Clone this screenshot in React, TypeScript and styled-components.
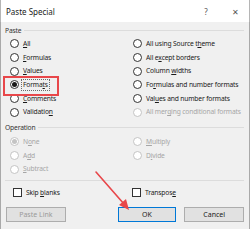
import React from "react";
import styled, { createGlobalStyle } from "styled-components";

const GlobalStyle = createGlobalStyle`
  html, body { margin: 0; padding: 0; background: #ffffff; }
  body { font-family: "Noto Sans", "Open Sans", sans-serif; }
  * { box-sizing: border-box; }
`;

const Dialog = styled.div`
  position: relative;
  width: 250px;
  height: 229px;
  display: flex;
  flex-direction: column;
  overflow: hidden;
  color: #1a1a1a;
`;

const TitleBar = styled.div`
  height: 22px;
  background: #ffffff;
  display: flex;
  align-items: center;
  padding-left: 5px;
  border-left: 1px solid #b5b5b5;
  border-right: 1px solid #b5b5b5;
`;

const Title = styled.div`
  flex: 1;
  font-size: 8px;
  color: #1a1a1a;
`;

const TitleButton = styled.div<{ $w: number }>`
  width: ${(p) => p.$w}px;
  text-align: center;
  font-size: 8px;
  color: #555;
`;

const Body = styled.div`
  flex: 1;
  background: #f0f0f0;
  border-left: 1px solid #a9a9a9;
  border-right: 1px solid #a9a9a9;
  padding: 3px 5px 0 4px;
  display: flex;
  flex-direction: column;
  font-size: 6.7px;
  letter-spacing: -0.15px;
`;

const GroupHeader = styled.div<{ $mt: number }>`
  display: flex;
  align-items: center;
  height: 10px;
  margin-top: ${(p) => p.$mt}px;
  color: #333;
`;

const GroupLine = styled.div`
  flex: 1;
  height: 1px;
  background: #dcdcdc;
  margin-left: 3px;
`;

const Grid = styled.div<{ $mt: number }>`
  display: grid;
  grid-template-columns: 123px 1fr;
  grid-auto-rows: 13.7px;
  margin-top: ${(p) => p.$mt}px;
`;

const Option = styled.div<{ $left: number; $disabled?: boolean }>`
  display: flex;
  align-items: center;
  padding-left: ${(p) => p.$left}px;
  color: ${(p) => (p.$disabled ? "#a6a6a6" : "#1a1a1a")};
  white-space: nowrap;
`;

const Radio = styled.span<{ $checked?: boolean; $disabled?: boolean }>`
  width: 9px;
  height: 9px;
  border-radius: 50%;
  border: 1px solid ${(p) => (p.$disabled ? "#c4c4c4" : "#333")};
  background: #fff;
  display: flex;
  align-items: center;
  justify-content: center;
  margin-right: 2px;
  flex-shrink: 0;
  &::after {
    content: "";
    display: ${(p) => (p.$checked ? "block" : "none")};
    width: 5px;
    height: 5px;
    border-radius: 50%;
    background: ${(p) => (p.$disabled ? "#c4c4c4" : "#1a1a1a")};
  }
`;

const Label = styled.span<{ $focus?: boolean }>`
  line-height: 10px;
  padding: 0 1px;
  border: 1px dotted ${(p) => (p.$focus ? "#6b6b6b" : "transparent")};
  u { text-decoration-thickness: 0.5px; text-underline-offset: 1px; }
`;

const Separator = styled.div`
  height: 1px;
  background: #dcdcdc;
  margin: 4px 0 0 0;
`;

const CheckRow = styled.div`
  display: grid;
  grid-template-columns: 119px 1fr;
  height: 13px;
  margin-top: 5px;
`;

const CheckOption = styled.div<{ $left: number }>`
  display: flex;
  align-items: center;
  padding-left: ${(p) => p.$left}px;
`;

const Checkbox = styled.span`
  width: 9px;
  height: 9px;
  border: 1px solid #333;
  background: #fff;
  margin-right: 2px;
  flex-shrink: 0;
`;

const ButtonRow = styled.div`
  display: flex;
  margin-top: 8px;
  padding-left: 1px;
`;

const Button = styled.div<{ $w: number; $ml: number; $primary?: boolean; $disabled?: boolean }>`
  width: ${(p) => p.$w}px;
  height: 15px;
  margin-left: ${(p) => p.$ml}px;
  background: #e1e1e1;
  border: 1px solid ${(p) => (p.$primary ? "#0078d7" : "#adadad")};
  color: ${(p) => (p.$disabled ? "#9a9a9a" : "#1a1a1a")};
  display: flex;
  align-items: center;
  justify-content: center;
  font-size: 7px;
  letter-spacing: 0;
`;

const Highlight = styled.div`
  position: absolute;
  left: 3px;
  top: 76px;
  width: 56px;
  height: 20px;
  border: 2px solid #e8474a;
  pointer-events: none;
`;

const ArrowSvg = styled.svg`
  position: absolute;
  left: 0;
  top: 0;
  pointer-events: none;
`;

type Opt = { label: React.ReactNode; checked?: boolean; disabled?: boolean; focus?: boolean };

const pasteLeft: Opt[] = [
  { label: <><u>A</u>ll</> },
  { label: <><u>F</u>ormulas</> },
  { label: <><u>V</u>alues</> },
  { label: <>Forma<u>t</u>s</>, checked: true, focus: true },
  { label: <><u>C</u>omments</> },
  { label: <>Validatio<u>n</u></> },
];

const pasteRight: Opt[] = [
  { label: <>All using Source t<u>h</u>eme</> },
  { label: <>All e<u>x</u>cept borders</> },
  { label: <>Column <u>w</u>idths</> },
  { label: <>Fo<u>r</u>mulas and number formats</> },
  { label: <>Val<u>u</u>es and number formats</> },
  { label: <>All mer<u>g</u>ing conditional formats</>, disabled: true },
];

const opLeft: Opt[] = [
  { label: <>N<u>o</u>ne</>, checked: true, disabled: true },
  { label: <>A<u>d</u>d</>, disabled: true },
  { label: <><u>S</u>ubtract</>, disabled: true },
];

const opRight: Opt[] = [
  { label: <><u>M</u>ultiply</>, disabled: true },
  { label: <>D<u>i</u>vide</>, disabled: true },
];

function interleave(left: Opt[], right: (Opt | null)[]) {
  const out: { o: Opt | null; col: number }[] = [];
  const n = Math.max(left.length, right.length);
  for (let i = 0; i < n; i++) {
    out.push({ o: left[i] ?? null, col: 0 });
    out.push({ o: right[i] ?? null, col: 1 });
  }
  return out;
}

function OptionCell({ o }: { o: Opt | null }) {
  if (!o) return <div />;
  return (
    <Option $left={5} $disabled={o.disabled}>
      <Radio $checked={o.checked} $disabled={o.disabled} />
      <Label $focus={o.focus}>{o.label}</Label>
    </Option>
  );
}

export default function App() {
  return (
    <>
      <GlobalStyle />
      <Dialog>
        <TitleBar>
          <Title>Paste Special</Title>
          <TitleButton $w={30}>?</TitleButton>
          <TitleButton $w={28}>✕</TitleButton>
        </TitleBar>
        <Body>
          <GroupHeader $mt={0}>
            <span>Paste</span>
            <GroupLine />
          </GroupHeader>
          <Grid $mt={2}>
            {interleave(pasteLeft, pasteRight).map((c, i) => (
              <OptionCell key={i} o={c.o} />
            ))}
          </Grid>
          <GroupHeader $mt={3}>
            <span>Operation</span>
            <GroupLine />
          </GroupHeader>
          <Grid $mt={3}>
            {interleave(opLeft, opRight).map((c, i) => (
              <OptionCell key={i} o={c.o} />
            ))}
          </Grid>
          <Separator />
          <CheckRow>
            <CheckOption $left={8}>
              <Checkbox />
              <Label>Skip <u>b</u>lanks</Label>
            </CheckOption>
            <CheckOption $left={8}>
              <Checkbox />
              <Label>Transpos<u>e</u></Label>
            </CheckOption>
          </CheckRow>
          <ButtonRow>
            <Button $w={60} $ml={0} $disabled>Paste Link</Button>
            <Button $w={59} $ml={52} $primary>OK</Button>
            <Button $w={60} $ml={8}>Cancel</Button>
          </ButtonRow>
        </Body>
        <Highlight />
        <ArrowSvg width="250" height="229" viewBox="0 0 250 229">
          <line x1="96" y1="172" x2="124" y2="204" stroke="#e8474a" strokeWidth="1.6" strokeLinecap="round" />
          <polygon points="129,210 119,205 126,199" fill="#e8474a" />
        </ArrowSvg>
      </Dialog>
    </>
  );
}
